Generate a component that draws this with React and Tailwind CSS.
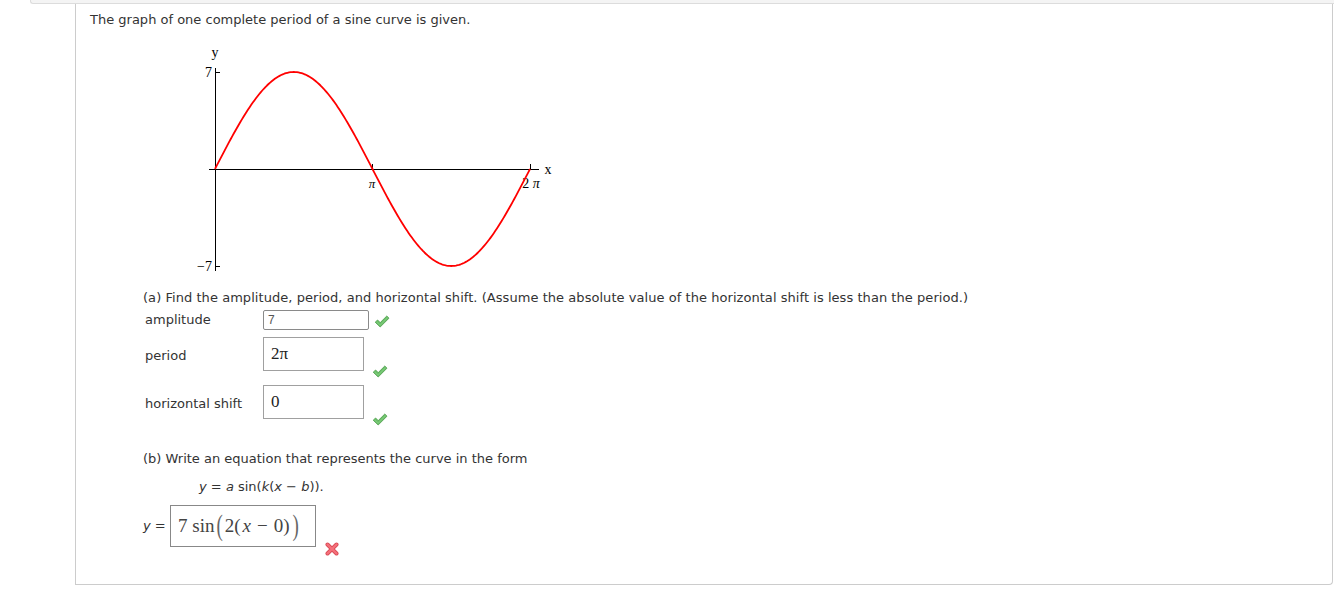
import React from "react";

function Check() {
  return (
    <svg width="16" height="13" viewBox="0 0 16 13" className="block">
      <path d="M1.2 7.2 L3.6 5 L6.2 7.6 L12.8 1 L15 3.2 L6.2 12 Z" fill="#6cc06a" stroke="#4a9a48" strokeWidth="0.8" strokeLinejoin="round" />
      <path d="M2.6 7 L6.2 10.2 L13.6 2.6" fill="none" stroke="#8fd88c" strokeWidth="0.8" opacity="0.7" />
    </svg>
  );
}

function Cross() {
  return (
    <svg width="14" height="14" viewBox="0 0 14 14" className="block">
      <path d="M2.5 2.5 L11.5 11.5 M11.5 2.5 L2.5 11.5" stroke="#d94a55" strokeWidth="4" strokeLinecap="round" />
      <path d="M2.5 2.5 L11.5 11.5 M11.5 2.5 L2.5 11.5" stroke="#f5707b" strokeWidth="2.4" strokeLinecap="round" />
    </svg>
  );
}

function Graph() {
  const x0 = 20;
  const yMid = 129;
  const w = 315;
  const amp = 97;
  let d = "";
  for (let i = 0; i <= 200; i++) {
    const t = (i / 200) * 2 * Math.PI;
    const x = x0 + (i / 200) * w;
    const y = yMid - amp * Math.sin(t);
    d += (i === 0 ? "M" : "L") + x.toFixed(2) + " " + y.toFixed(2) + " ";
  }
  return (
    <svg width="370" height="235" viewBox="0 0 370 235" className="block">
      <g fontFamily="'Liberation Serif', serif" fill="#000">
        <text x="20" y="17" fontSize="14" textAnchor="middle">y</text>
        <text x="17" y="37" fontSize="14" textAnchor="end">7</text>
        <text x="17" y="231" fontSize="14" textAnchor="end">−7</text>
        <text x="177" y="148" fontSize="13" fontStyle="italic" textAnchor="middle">π</text>
        <text x="336" y="148" fontSize="14" textAnchor="middle">2 <tspan fontStyle="italic">π</tspan></text>
        <text x="353" y="134" fontSize="14" textAnchor="middle">x</text>
      </g>
      <g stroke="#000" strokeWidth="1" fill="none" shapeRendering="crispEdges">
        <line x1="20.5" y1="28" x2="20.5" y2="231" />
        <line x1="20" y1="32.5" x2="25" y2="32.5" />
        <line x1="20" y1="226.5" x2="25" y2="226.5" />
        <line x1="14" y1="129.5" x2="344" y2="129.5" />
        <line x1="177.5" y1="124" x2="177.5" y2="129" />
        <line x1="335.5" y1="124" x2="335.5" y2="129" />
      </g>
      <path d={d} fill="none" stroke="#ff0000" strokeWidth="1.8" strokeLinejoin="round" />
    </svg>
  );
}

export default function App() {
  const sans = { fontFamily: "'DejaVu Sans', Verdana, sans-serif" };
  const serif = { fontFamily: "'Liberation Serif', 'Times New Roman', serif" };
  return (
    <div className="bg-white w-[1334px] h-[602px] text-[#333]" style={sans}>
      <div className="ml-[30px] h-[4px] bg-[#f4f4f4] border-b border-l border-[#dcdcdc] rounded-bl-[3px]" />
      <div className="ml-[75px] mr-[1px] h-[581px] border-l border-r border-b border-[#cccccc] rounded-br-[4px] pl-[14px] pt-[8px]">
        <div className="text-[13px] leading-[16px]">The graph of one complete period of a sine curve is given.</div>
        <div className="mt-[12px] ml-[105px]">
          <Graph />
        </div>
        <div className="ml-[53px]">
          <div className="mt-[15px] text-[13px] leading-[16px] tracking-[0.05px]">
            (a) Find the amplitude, period, and horizontal shift. (Assume the absolute value of the horizontal shift is less than the period.)
          </div>
          <div className="mt-[4px] flex items-center text-[13px]">
            <div className="w-[120px] pl-[2px]">amplitude</div>
            <div className="w-[106px] h-[20px] border border-[#8a8a8a] rounded-[2px] flex items-center pl-[4px] text-[12px] text-[#555]" style={{ fontFamily: "'Liberation Sans', Arial, sans-serif" }}>7</div>
            <div className="ml-[5px] mt-[2px]"><Check /></div>
          </div>
          <div className="mt-[7px] flex items-end text-[13px]">
            <div className="w-[120px] pl-[2px] self-center mt-[4px]">period</div>
            <div className="w-[101px] h-[34px] border border-[#a0a0a0] flex items-center pl-[7px] text-[17px] text-[#222]" style={serif}>2π</div>
            <div className="ml-[8px] mb-[-7px]"><Check /></div>
          </div>
          <div className="mt-[14px] flex items-end text-[13px]">
            <div className="w-[120px] pl-[2px] self-center mt-[4px]">horizontal shift</div>
            <div className="w-[101px] h-[34px] border border-[#a0a0a0] flex items-center pl-[7px] text-[17px] text-[#222]" style={serif}>0</div>
            <div className="ml-[8px] mb-[-7px]"><Check /></div>
          </div>
          <div className="mt-[32px] text-[13px] leading-[16px]">(b) Write an equation that represents the curve in the form</div>
          <div className="mt-[12px] ml-[56px] text-[13px] leading-[16px]">
            <i>y</i> = <i>a</i> sin(<i>k</i>(<i>x</i> − <i>b</i>)).
          </div>
          <div className="mt-[10px] flex items-end text-[13px]">
            <div className="w-[27px] self-center"><i>y</i> =</div>
            <div className="w-[146px] h-[42px] border border-[#888] flex items-center pl-[7px] text-[19px] text-[#444] whitespace-nowrap" style={serif}>
              <span>7 sin</span>
              <span className="inline-block scale-y-[1.5] mx-[2px] text-[#666]">(</span>
              <span>2(</span>
              <span className="italic ml-[2px]">x</span>
              <span className="mx-[6px]">−</span>
              <span>0)</span>
              <span className="inline-block scale-y-[1.5] ml-[3px] text-[#666]">)</span>
            </div>
            <div className="ml-[9px] mb-[-9px]"><Cross /></div>
          </div>
        </div>
      </div>
    </div>
  );
}
